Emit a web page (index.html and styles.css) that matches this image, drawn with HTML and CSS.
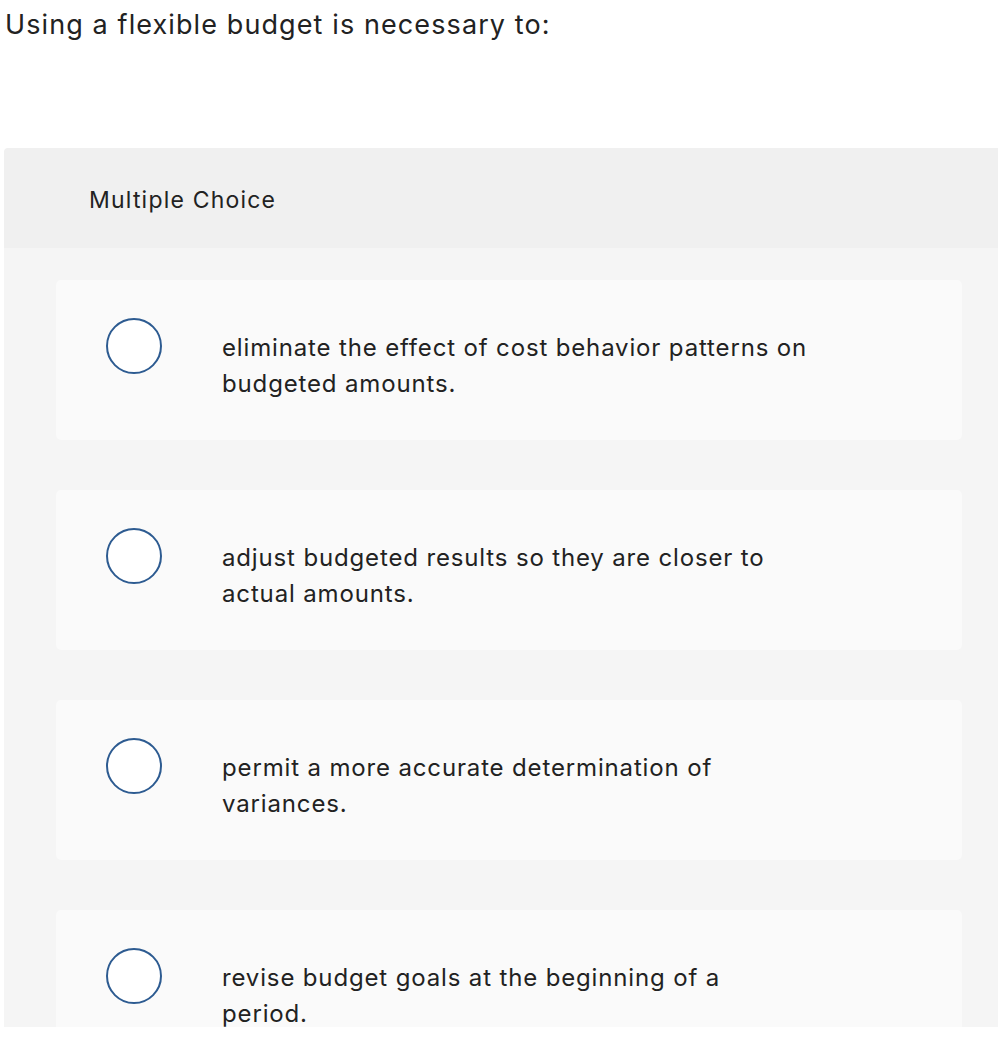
FILE: index.html
```html
<!DOCTYPE html>
<html lang="en">
<head>
<meta charset="utf-8">
<title>Multiple Choice</title>
<link rel="stylesheet" href="styles.css">
</head>
<body>
<h1 class="question">Using a flexible budget is necessary to:</h1>
<section class="panel">
  <div class="panel-header">Multiple Choice</div>
  <div class="choices">
    <label class="choice">
      <span class="radio"></span>
      <span class="choice-text">eliminate the effect of cost behavior patterns on<br>budgeted amounts.</span>
    </label>
    <label class="choice">
      <span class="radio"></span>
      <span class="choice-text">adjust budgeted results so they are closer to<br>actual amounts.</span>
    </label>
    <label class="choice">
      <span class="radio"></span>
      <span class="choice-text">permit a more accurate determination of<br>variances.</span>
    </label>
    <label class="choice">
      <span class="radio"></span>
      <span class="choice-text">revise budget goals at the beginning of a<br>period.</span>
    </label>
  </div>
</section>
</body>
</html>
```
FILE: styles.css
```css
html, body {
  margin: 0;
  padding: 0;
  background: #ffffff;
}
body {
  font-family: "Inter", "Open Sans", "Liberation Sans", sans-serif;
  color: #222222;
  width: 998px;
  height: 1038px;
  overflow: hidden;
}
.question {
  margin: 0;
  padding: 7px 0 0 5px;
  height: 142px;
  box-sizing: border-box;
  font-size: 27px;
  line-height: 36px;
  font-weight: 400;
  letter-spacing: 1.1px;
  color: #222222;
}
.panel {
  margin-left: 4px;
  width: 994px;
  height: 879px;
  overflow: hidden;
  background: #f5f5f5;
  border-radius: 4px 0 0 0;
  margin-top: 6px;
}
.panel-header {
  height: 100px;
  box-sizing: border-box;
  padding: 3px 0 0 85px;
  background: #f0f0f0;
  display: flex;
  align-items: center;
  font-size: 23px;
  letter-spacing: 1.2px;
  color: #222222;
  border-radius: 4px 0 0 0;
}
.choices {
  display: flex;
  flex-direction: column;
  gap: 50px;
  padding: 32px 36px 0 52px;
}
.choice {
  display: flex;
  align-items: flex-start;
  height: 160px;
  box-sizing: border-box;
  padding: 38px 0 0 50px;
  background: #fafafa;
  border-radius: 5px;
  flex-shrink: 0;
  cursor: pointer;
}
.radio {
  width: 56px;
  height: 56px;
  box-sizing: border-box;
  border: 2px solid #2d5b91;
  border-radius: 50%;
  background: #ffffff;
  flex-shrink: 0;
}
.choice-text {
  margin-left: 60px;
  padding-top: 12px;
  font-size: 24px;
  line-height: 36px;
  letter-spacing: 0.85px;
  color: #222222;
}
```
